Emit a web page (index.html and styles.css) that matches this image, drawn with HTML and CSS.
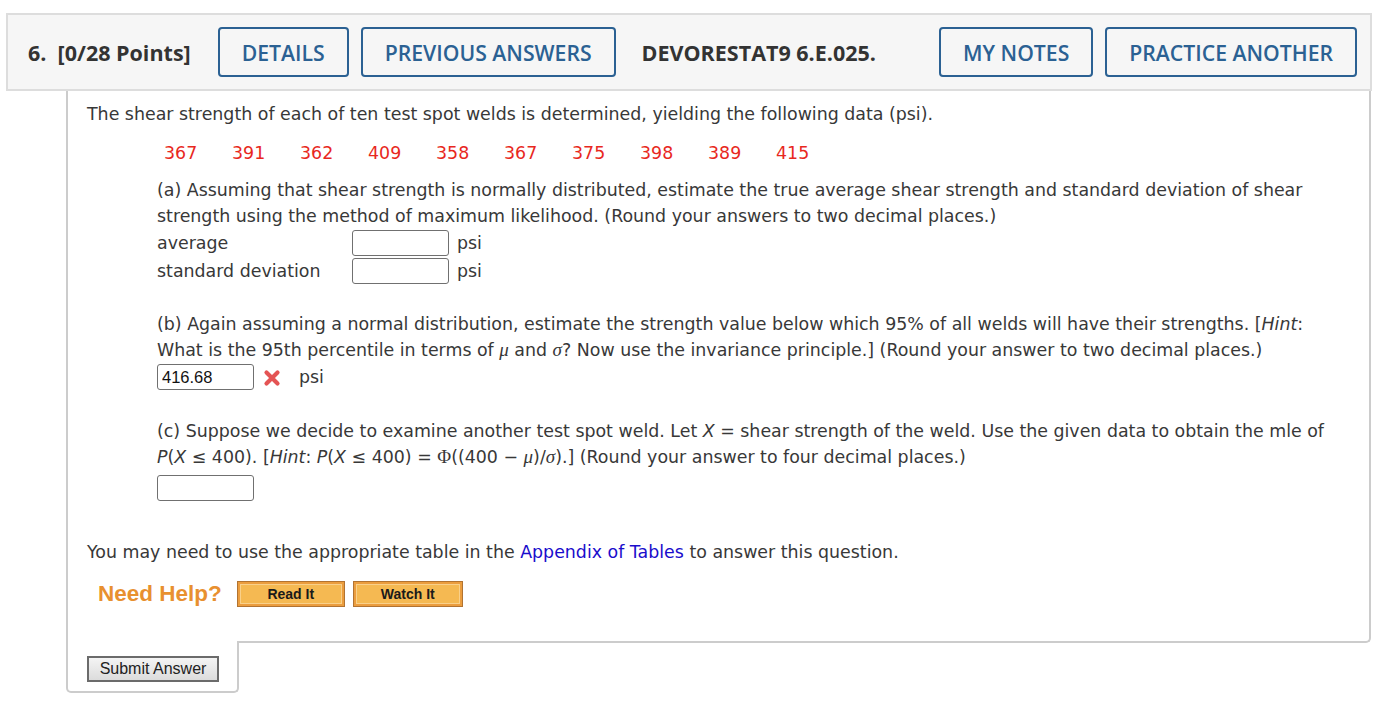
FILE: index.html
```html
<!DOCTYPE html>
<html>
<head>
    <title>Question 6</title>
    <link rel="stylesheet" href="styles.css">
</head>
<body>
    <div class="question">
        <div class="q-header">
            <span class="q-num">6.&nbsp; [0/28 Points]</span>
            <button class="hdr-btn">DETAILS</button>
            <button class="hdr-btn">PREVIOUS ANSWERS</button>
            <span class="q-code">DEVORESTAT9 6.E.025.</span>
            <div class="hdr-right">
                <button class="hdr-btn">MY NOTES</button>
                <button class="hdr-btn">PRACTICE ANOTHER</button>
            </div>
        </div>

        <div class="q-body">
            <p class="intro">The shear strength of each of ten test spot welds is determined, yielding the following data (psi).</p>
            <div class="data-row">
                <span>367</span><span>391</span><span>362</span><span>409</span><span>358</span><span>367</span><span>375</span><span>398</span><span>389</span><span>415</span>
            </div>

            <div class="part part-a">
                <p>(a) Assuming that shear strength is normally distributed, estimate the true average shear strength and standard deviation of shear strength using the method of maximum likelihood. (Round your answers to two decimal places.)</p>
                <div class="answer-row">
                    <span class="ans-label">average</span>
                    <input type="text" class="ans-input">
                    <span class="unit">psi</span>
                </div>
                <div class="answer-row">
                    <span class="ans-label">standard deviation</span>
                    <input type="text" class="ans-input">
                    <span class="unit">psi</span>
                </div>
            </div>

            <div class="part part-b">
                <p>(b) Again assuming a normal distribution, estimate the strength value below which 95% of all welds will have their strengths. [<i>Hint</i>: What is the 95th percentile in terms of <span class="math">&mu;</span> and <span class="math">&sigma;</span>? Now use the invariance principle.] (Round your answer to two decimal places.)</p>
                <div class="answer-row">
                    <input type="text" class="ans-input" value="416.68">
                    <svg class="wrong" width="18" height="18" viewBox="0 0 18 18">
                        <path d="M3.5 3.5 L14.5 14.5 M14.5 3.5 L3.5 14.5" stroke="#e45454" stroke-width="4.2" stroke-linecap="round"/>
                    </svg>
                    <span class="unit unit-wide">psi</span>
                </div>
            </div>

            <div class="part part-c">
                <p>(c) Suppose we decide to examine another test spot weld. Let <i>X</i> = shear strength of the weld. Use the given data to obtain the mle of <i>P</i>(<i>X</i> &le; 400). [<i>Hint</i>: <i>P</i>(<i>X</i> &le; 400) = <span class="math-up">&Phi;</span>((400 &minus; <span class="math">&mu;</span>)/<span class="math">&sigma;</span>).] (Round your answer to four decimal places.)</p>
                <div class="answer-row">
                    <input type="text" class="ans-input">
                </div>
            </div>

            <p class="tables-note">You may need to use the appropriate table in the <a href="#">Appendix of Tables</a> to answer this question.</p>

            <div class="need-help">
                <span class="help-title">Need Help?</span>
                <button class="help-btn">Read It</button>
                <button class="help-btn">Watch It</button>
            </div>
        </div>

        <div class="submit-tab">
            <button class="submit-btn">Submit Answer</button>
        </div>
    </div>
</body>
</html>
```

FILE: styles.css
```css
body {
    margin: 0;
    padding: 13px 22px 0 6px;
    background-color: #fff;
    color: #333;
}
p {
    margin: 0;
}
.q-header {
    display: flex;
    align-items: center;
    padding: 12px 13px 12px 20px;
    background-color: #f6f6f6;
    border: 2px solid #dddddd;
    font-family: "Open Sans", sans-serif;
    font-size: 21.5px;
}
.q-num {
    font-weight: 700;
    color: #333;
    margin-right: 27px;
    white-space: pre;
}
.hdr-btn {
    height: 50px;
    padding: 0 22px;
    margin-right: 12px;
    background-color: #f6f6f6;
    border: 2px solid #2b6193;
    border-radius: 4px;
    color: #2b6193;
    font-family: "Open Sans", sans-serif;
    font-size: 21.2px;
    font-weight: 600;
    cursor: pointer;
}
.q-code {
    margin-left: 14px;
    font-weight: 700;
    color: #333;
}
.hdr-right {
    margin-left: auto;
    display: flex;
}
.hdr-right .hdr-btn:last-child {
    margin-right: 0;
}
.q-body {
    margin-left: 60px;
    margin-right: 1px;
    padding: 10px 19px 34px 19px;
    border-left: 2px solid #cccccc;
    border-right: 2px solid #cccccc;
    border-bottom: 2px solid #cccccc;
    border-bottom-right-radius: 5px;
    font-family: "DejaVu Sans", sans-serif;
    font-size: 17.4px;
    line-height: 26px;
    color: #383838;
}
.data-row {
    margin: 13px 0 11px 77px;
    color: #e8281e;
}
.data-row span {
    display: inline-block;
    width: 68px;
}
.part {
    margin-left: 70px;
}
.part-b {
    margin-top: 26px;
}
.part-c {
    margin-top: 27px;
}
.answer-row {
    display: flex;
    align-items: center;
    height: 28px;
}
.ans-label {
    width: 195px;
}
.ans-input {
    box-sizing: border-box;
    width: 97px;
    height: 26px;
    padding: 2px 4px;
    border: 1px solid #707070;
    border-radius: 3px;
    font-family: "Liberation Sans", Arial, sans-serif;
    font-size: 16.5px;
    color: #111;
}
.unit {
    margin-left: 8px;
}
.wrong {
    margin-left: 9px;
    margin-top: 2px;
}
.unit-wide {
    margin-left: 18px;
}
.part-c .answer-row {
    margin-top: 4px;
}
.math {
    font-family: "Liberation Serif", serif;
    font-style: italic;
    font-size: 19px;
    line-height: 18px;
}
.math-up {
    font-family: "Liberation Serif", serif;
    font-size: 19px;
    line-height: 18px;
}
.tables-note {
    margin-top: 37px;
}
.tables-note a {
    color: #1a0dcc;
    text-decoration: none;
}
.need-help {
    display: flex;
    align-items: center;
    height: 26px;
    margin-top: 16px;
    margin-left: 11px;
}
.help-title {
    font-family: "Liberation Sans", Arial, sans-serif;
    font-size: 22.5px;
    line-height: 26px;
    font-weight: 700;
    color: #e8902f;
    margin-right: 15px;
}
.help-btn {
    height: 26px;
    width: 108px;
    margin-right: 8px;
    padding: 0;
    background-color: #f5b952;
    border: 1px solid #b27331;
    box-shadow: inset 0 0 0 2px #eb9d3e, inset 0 0 0 3px #f9d08a;
    font-family: "Liberation Sans", Arial, sans-serif;
    font-size: 14px;
    font-weight: 700;
    color: #1a1a1a;
    cursor: pointer;
}
.help-btn:last-child {
    width: 110px;
}
.submit-tab {
    box-sizing: border-box;
    width: 173px;
    height: 52px;
    margin-left: 60px;
    margin-top: -2px;
    padding: 15px 0 0 19px;
    background-color: #fff;
    border: 2px solid #cccccc;
    border-top: none;
    border-radius: 0 0 5px 5px;
}
.submit-btn {
    box-sizing: border-box;
    width: 132px;
    height: 26px;
    padding: 0;
    background: linear-gradient(#f4f4f4, #dcdcdc);
    border: 2px solid #6b6b6b;
    font-family: "Liberation Sans", Arial, sans-serif;
    font-size: 16px;
    color: #222;
    cursor: pointer;
}
```
